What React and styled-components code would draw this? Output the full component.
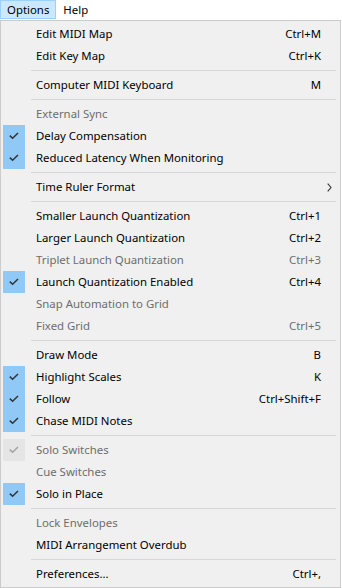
import styled, { createGlobalStyle } from "styled-components";

const GlobalStyle = createGlobalStyle`
  html, body {
    margin: 0;
    padding: 0;
    background: #ffffff;
  }
  body {
    font-family: "Segoe UI", "Noto Sans", "Open Sans", sans-serif;
    font-size: 11.4px;
    color: #000;
  }
`;

const menu = [
  { label: "Edit MIDI Map", key: "Ctrl+M" },
  { label: "Edit Key Map", key: "Ctrl+K" },
  "sep",
  { label: "Computer MIDI Keyboard", key: "M" },
  "sep",
  { label: "External Sync", disabled: true },
  { label: "Delay Compensation", checked: true },
  { label: "Reduced Latency When Monitoring", checked: true },
  "sep",
  { label: "Time Ruler Format", submenu: true },
  "sep",
  { label: "Smaller Launch Quantization", key: "Ctrl+1" },
  { label: "Larger Launch Quantization", key: "Ctrl+2" },
  { label: "Triplet Launch Quantization", key: "Ctrl+3", disabled: true },
  { label: "Launch Quantization Enabled", key: "Ctrl+4", checked: true },
  { label: "Snap Automation to Grid", disabled: true },
  { label: "Fixed Grid", key: "Ctrl+5", disabled: true },
  "sep",
  { label: "Draw Mode", key: "B" },
  { label: "Highlight Scales", key: "K", checked: true },
  { label: "Follow", key: "Ctrl+Shift+F", checked: true },
  { label: "Chase MIDI Notes", checked: true },
  "sep",
  { label: "Solo Switches", disabled: true, checked: true },
  { label: "Cue Switches", disabled: true },
  { label: "Solo in Place", checked: true },
  "sep",
  { label: "Lock Envelopes", disabled: true },
  { label: "MIDI Arrangement Overdub" },
  "sep",
  { label: "Preferences...", key: "Ctrl+," },
];

const App = () => {
  return (
    <>
      <GlobalStyle />
      <MenuBar>
        <BarItem $open>Options</BarItem>
        <BarItem>Help</BarItem>
      </MenuBar>
      <Dropdown>
        {menu.map((item, i) =>
          item === "sep" ? (
            <Separator key={i} />
          ) : (
            <Row key={i} $disabled={item.disabled}>
              <CheckCell $checked={item.checked} $disabled={item.disabled}>
                {item.checked && (
                  <svg width="10" height="8" viewBox="0 0 10 8">
                    <path
                      d="M0.8 3.6 L3.6 6.3 L9 1"
                      fill="none"
                      stroke="currentColor"
                      strokeWidth="1.5"
                    />
                  </svg>
                )}
              </CheckCell>
              <Label>{item.label}</Label>
              <Shortcut>{item.key}</Shortcut>
              <Arrow>
                {item.submenu && (
                  <svg width="5" height="9" viewBox="0 0 5 9">
                    <path
                      d="M0.7 0.7 L4 4.5 L0.7 8.3"
                      fill="none"
                      stroke="#333"
                      strokeWidth="1.1"
                    />
                  </svg>
                )}
              </Arrow>
            </Row>
          )
        )}
      </Dropdown>
    </>
  );
};

const MenuBar = styled.div`
  display: flex;
  height: 20px;
  background: #fff;
`;

const BarItem = styled.div`
  display: flex;
  align-items: center;
  height: 19px;
  padding: 0 6px 1px;
  box-sizing: border-box;
  border: 1px solid ${(p) => (p.$open ? "#99d1ff" : "transparent")};
  background: ${(p) => (p.$open ? "#cce8ff" : "transparent")};
`;

const Dropdown = styled.div`
  width: 341px;
  box-sizing: border-box;
  border: 1px solid #cccccc;
  background: #f0f0f0;
  padding: 2px;
  height: 568px;
`;

const Separator = styled.div`
  height: 7px;
  display: flex;
  align-items: center;
  padding-left: 28px;
  padding-right: 2px;
  &::after {
    content: "";
    flex: 1;
    height: 1px;
    background: #d7d7d7;
  }
`;

const Row = styled.div`
  display: grid;
  grid-template-columns: 22px 1fr auto 17px;
  align-items: center;
  height: 22px;
  color: ${(p) => (p.$disabled ? "#6d6d6d" : "#000")};
`;

const CheckCell = styled.div`
  height: 22px;
  display: flex;
  align-items: center;
  justify-content: center;
  background: ${(p) =>
    p.$checked ? (p.$disabled ? "#e5e5e5" : "#90c8f6") : "transparent"};
  color: ${(p) => (p.$disabled ? "#a3a3a3" : "#333")};
`;

const Label = styled.span`
  padding-left: 11px;
  padding-bottom: 1px;
  white-space: nowrap;
`;

const Shortcut = styled.span`
  padding-bottom: 1px;
  white-space: nowrap;
`;

const Arrow = styled.span`
  display: flex;
  align-items: center;
  justify-content: flex-end;
  padding-right: 6px;
`;

export default App;
